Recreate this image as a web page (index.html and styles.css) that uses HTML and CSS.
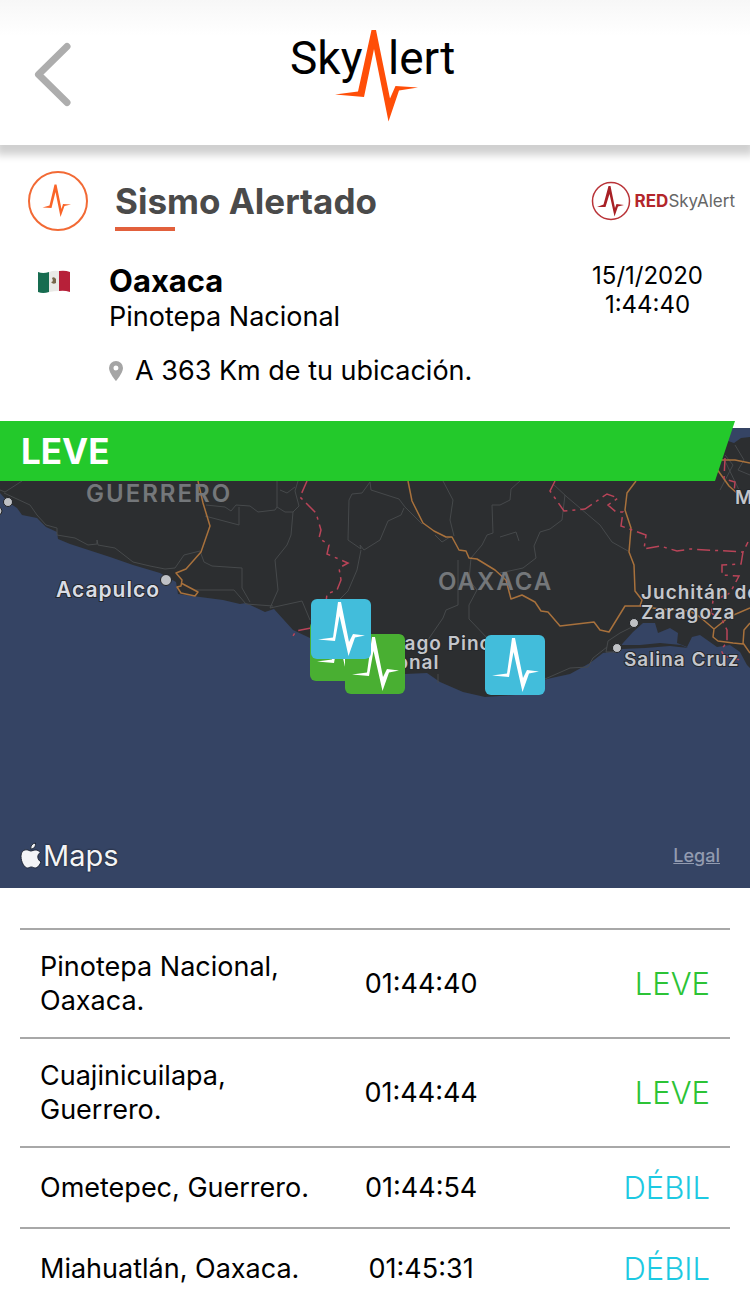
FILE: index.html
```html
<!DOCTYPE html>
<html lang="es">
<head>
<meta charset="utf-8">
<meta name="viewport" content="width=device-width, initial-scale=1">
<title>SkyAlert</title>
<link rel="stylesheet" href="styles.css">
</head>
<body>
<header class="topbar">
  <button class="back" type="button" aria-label="Atrás">
    <svg width="38" height="66" viewBox="0 0 38 66" aria-hidden="true"><path d="M33 4.500 4.500 32.500 33 60.500" fill="none" stroke="#adadad" stroke-width="7" stroke-linecap="round" stroke-linejoin="round"/></svg>
  </button>
  <svg class="brand" width="170" height="94" viewBox="291 27 170 94" role="img" aria-label="SkyAlert">
    <text x="291" y="73" class="brand-text">Sky</text>
    <text x="389" y="73" class="brand-text">lert</text>
    <path d="M336 93.500 359 90.500 372.500 29H377L391 97.500 396.500 85 419 86.500 400 89.500 389.500 120.500 375 48 365 96Z" fill="#ff4e08"/>
  </svg>
</header>
<main>
  <section class="event">
    <div class="title-row">
      <svg class="badge" width="60" height="60" viewBox="0 0 60 60" aria-hidden="true"><circle cx="30" cy="30" r="29" fill="none" stroke="#f26a35" stroke-width="2"/><path d="M14.500 36.500 21.500 34.500 26.500 13.500H28.500L33.500 38 35 33 43 33.500 36.500 35 32.500 46 27.500 21 23.500 37Z" fill="#fa6428"/></svg>
      <h1 class="title">Sismo Alertado</h1>
      <div class="network">
        <svg width="40" height="40" viewBox="0 0 40 40" aria-hidden="true"><circle cx="20" cy="20" r="18.500" fill="none" stroke="#b93338" stroke-width="1.500"/><path d="M6 26 12.500 23.500 17.500 5H19.500L24 27 25.500 23 33 24 27 25.500 23.500 35.500 18.500 13 14.500 26Z" fill="#a82025"/></svg>
        <span><b>RED</b>SkyAlert</span>
      </div>
    </div>
    <div class="details">
      <svg class="flag" width="32" height="24" viewBox="0 0 32 24" role="img" aria-label="México"><path d="M0 2Q5 4 11 2V22Q5 24 0 22Z" fill="#176c50"/><path d="M11 2Q16 0 21 1V21Q16 21 11 22Z" fill="#e9e9e6"/><path d="M21 1Q27 0 32 2V22Q26 20 21 21Z" fill="#b72039"/><path d="M14 8Q16 6 18 9L18 13Q15 15 13 12Q16 12 14 8Z" fill="#76664a"/></svg>
      <div class="place">
        <h2 class="state">Oaxaca</h2>
        <p class="city">Pinotepa Nacional</p>
        <p class="distance"><svg width="14" height="20" viewBox="0 0 14 20" aria-hidden="true"><path fill-rule="evenodd" d="M7 0a7 7 0 0 1 7 7c0 5-7 13-7 13S0 12 0 7a7 7 0 0 1 7-7Zm0 4.500a2.500 2.500 0 1 0 0 5 2.500 2.500 0 0 0 0-5Z" fill="#a5a5a5"/></svg>A 363 Km de tu ubicación.</p>
      </div>
      <p class="when">15/1/2020<br>1:44:40</p>
    </div>
  </section>
  <section class="map" aria-label="Mapa">
    <svg class="map-art" viewBox="0 428 750 460" preserveAspectRatio="xMidYMid slice">
      <defs>
        <path id="pulse" d="M7 40.500 22 38.500 27 3H30L38 43 42 35 54 36.500 44 38.500 37.500 57 28.500 17 24 42Z" fill="#fff"/>
      </defs>
      <rect y="428" width="750" height="460" fill="#2c2e30"/>
      <path d="M0 493 8 502 17 508 22 515 37 518 46 527 57 532 58 539 70 544 110 557 133 565 160 573 176 582 178 594 200 597 223 600 240 604 246 603 265 612 274 609 293 630 310 638 345 670 405 674 427 673 440 682 463 692 485 697 515 695 547 679 570 674 590 663 603 653 617 651 623 643 633 632 643 623 655 623 658 633 670 628 678 633 677 643 687 647 692 637 700 635 717 647 730 645 740 652 747 665 750 668V888H0Z" fill="#354464"/>
      <path d="M728 428H750V437L741 438 734 443 725 440Z" fill="#354464"/>
      <path d="M619 645 640 645 660 643 681 645 688 648 670 646 645 648 622 649Z" fill="#2c2e30"/>
      <g fill="none" stroke="#46494b" stroke-width="1">
        <path d="M0 490 5 492 22 481M4 493 30 505 37 515 46 525 57 528V535L75 538 88 545 97 544V540L98 545 115 548 133 562 150 566 165 569 175 568 184 555 200 551 204 562 212 566 242 568V588L250 602"/>
        <path d="M206 505 225 507 231 511 236 505 250 506 258 512 275 510 277 507 285 512 293 512 299 506 295 491 298 481M277 481V507M280 490 287 493 295 487M205 516 239 525V507"/>
        <path d="M293 512 291 535 287 545 275 560 278 590 270 608 302 601 310 620M273 606 246 604 234 590 195 590"/>
        <path d="M370 482 371 490 399 499 405 507 422 524M370 482 362 493 352 494 349 500 348 540 361 549 360 545 364 550 380 540 388 521 401 515 404 508M361 550 357 570 348 591 339 600"/>
        <path d="M443 481 453 500 450 520 454 536M435 535 442 542 450 537M500 505H492L493 533 487 535 482 545 471 558 469 580 477 590 469 605V619L490 641M458 560V605L446 610 443 618 432 634 425 644M438 674V683"/>
        <path d="M520 481 511 489 510 500 500 505M553 484 567 497 600 525 612 542 628 551M565 495 562 520 550 529 540 532 534 546 536 558 523 568 500 573M500 537 516 532 519 541M632 627 620 633 608 641 606 652 618 652M607 647 593 658 588 667 570 668 545 679"/>
        <path d="M720 490 733 465 725 455M735 445 744 460 738 470 750 475M725 461 740 492"/>
      </g>
      <g fill="none" stroke="#a8713c" stroke-width="1.500" stroke-linejoin="round">
        <path d="M198 481 203 503 210 526 201 552 186 569 176 573 182 580 181 586 177 587 181 593 195 596 198 592 181 583"/>
        <path d="M408 481 412 501 423 523 434 531 446 537 452 537 459 550 466 551 469 558 477 559 495 570 506 580 511 599 522 595 535 602 541 611 548 612 560 626 594 622 600 630 609 632 625 606 640 606 642 600 635 591 634 565 629 552 631 528 625 510 627 493 636 481"/>
        <path d="M640 606 660 609 690 611 700 617 714 629 713 637 718 641 733 643 743 644 744 630 750 623M714 629 729 617 750 608M743 643 750 653M714 465 729 486 738 494M721 460 735 460 750 463"/>
      </g>
      <g fill="none" stroke="#b94458" stroke-width="1.500" stroke-dasharray="13 5 3 5">
        <path d="M307 481 300 497 316 513 321 530 319 538 329 545 327 554 348 563 339 568 341 580 337 590 327 594 326 602M311 628 296 631 293 636"/>
        <path d="M555 481 550 491 564 511 585 509 607 494 618 498 608 505 616 512 623 512 621 526 632 530 646 535 644 549 660 546 677 551 690 549 743 552 748 542M743 552 741 564 722 565V575L739 576 730 593 713 601 711 613 722 620 727 630V642L721 650 724 656 740 660M725 458 724 479 735 482 734 493"/>
      </g>
      <g fill="#bfc1c5" stroke="#202225">
        <circle cx="8" cy="502" r="4.500"/><circle cx="166" cy="580" r="5.500"/><circle cx="634" cy="623" r="4.500"/><circle cx="617" cy="648" r="4.500"/><circle cx="-2" cy="511" r="4"/>
      </g>
      <g class="region"><text x="86" y="502">GUERRERO</text><text x="438" y="590">OAXACA</text></g>
      <g class="town">
        <text class="town-big" x="56" y="597">Acapulco</text>
        <text x="353" y="650">Santiago Pinotepa</text><text x="351" y="669">Nacional</text>
        <text x="641" y="599">Juchitán de</text><text x="641" y="619">Zaragoza</text>
        <text x="624" y="666">Salina Cruz</text><text x="735" y="504">Mi</text>
      </g>
      <g transform="translate(310 621)"><rect width="60" height="60" rx="6" fill="#49af32"/><use href="#pulse"/></g>
      <g transform="translate(345 634)"><rect width="60" height="60" rx="6" fill="#49af32"/><use href="#pulse"/></g>
      <g transform="translate(311 599)"><rect width="60" height="60" rx="6" fill="#42bddb"/><use href="#pulse"/></g>
      <g transform="translate(485 635)"><rect width="60" height="60" rx="6" fill="#42bddb"/><use href="#pulse"/></g>
    </svg>
    <p class="banner">LEVE</p>
    <div class="map-credits">
      <span class="maps-logo"><svg width="22" height="28" viewBox="0 0 22 28" aria-hidden="true"><path d="M15.500 1C12 1.500 10.500 4 10.800 7 14 7 15.800 4.500 15.500 1ZM11 9C9.500 9 8.500 7.800 6.200 7.800 3 7.800 1 10.500 1 14.500 1 20 4.500 26 7.500 26 9 26 9.500 25 11.300 25S13.800 26 15.200 26C17.800 26 20 22.500 21 19.800 17 18 16.800 12.500 20.300 10.500 17.500 6.500 13.500 8.500 11 9Z" fill="#f3f4f6" stroke="#1d2534"/></svg>Maps</span>
      <a class="legal" href="#legal">Legal</a>
    </div>
  </section>
  <table class="stations">
    <tbody>
      <tr><td class="station">Pinotepa Nacional, Oaxaca.</td><td class="time">01:44:40</td><td class="level level-mild">LEVE</td></tr>
      <tr><td class="station">Cuajinicuilapa, Guerrero.</td><td class="time">01:44:44</td><td class="level level-mild">LEVE</td></tr>
      <tr><td class="station">Ometepec, Guerrero.</td><td class="time">01:44:54</td><td class="level level-weak">DÉBIL</td></tr>
      <tr><td class="station">Miahuatlán, Oaxaca.</td><td class="time">01:45:31</td><td class="level level-weak">DÉBIL</td></tr>
    </tbody>
  </table>
</main>
</body>
</html>
```
FILE: styles.css
```css
* { box-sizing: border-box; }
body { margin: 0; background: #fff; color: #000; font-family: Inter, "Liberation Sans", sans-serif; overflow-x: hidden; }
h1, h2, p { margin: 0; }
.topbar { height: 145px; padding: 28px 34px 24px; display: grid; grid-template-columns: 1fr auto 1fr; align-items: center; background: linear-gradient(#f7f7f7, #fff 36px); box-shadow: 0 6px 8px 4px #d0d0d0; position: relative; }
.back { justify-self: start; display: flex; padding: 0; border: 0; background: none; cursor: pointer; }
.brand { display: block; }
.brand-text { font: 46px Roboto, sans-serif; }
.event { padding: 26px 15px 0 28px; }
.title-row { display: flex; align-items: center; height: 60px; }
.title { margin-left: 27px; height: 60px; font-size: 35px; line-height: 60px; font-weight: 700; color: #4a4a4a; position: relative; }
.title::after { content: ""; position: absolute; left: 0; bottom: 0; width: 60px; height: 4px; background: #e2603c; }
.network { margin-left: auto; display: flex; align-items: center; gap: 4px; font-size: 17px; color: #666; }
.network b { color: #b3262b; }
.details { display: flex; align-items: flex-start; padding: 30px 32px 30px 10px; }
.flag { margin-top: 9px; }
.place { margin-left: 39px; margin-top: 2px; }
.state { font-size: 31px; line-height: 36px; font-weight: 700; }
.city { font-size: 27px; line-height: 36px; }
.distance { display: flex; align-items: center; gap: 12px; margin-top: 18px; font-size: 27px; line-height: 36px; }
.when { margin-left: auto; font-size: 24px; line-height: 29px; text-align: center; }
.map { position: relative; height: 460px; margin-top: 9px; }
.map-art { display: block; width: 100%; height: 100%; }
.region { font-size: 24px; font-weight: 600; letter-spacing: 2px; fill: #74777a; }
.town { font-size: 19px; font-weight: 600; letter-spacing: 1px; fill: #c4c6cb; stroke: #25282c; stroke-width: 2px; paint-order: stroke; }
.town-big { font-size: 21px; fill: #d9dce5; }
.banner { position: absolute; top: -7px; left: 0; right: 15px; padding-left: 21px; background: #23c92b; clip-path: polygon(0 0, 100% 0, calc(100% - 20px) 100%, 0 100%); color: #fff; font-size: 35px; line-height: 60px; font-weight: 700; }
.map-credits { position: absolute; left: 20px; right: 30px; bottom: 12px; display: flex; align-items: center; justify-content: space-between; }
.maps-logo { display: flex; align-items: center; gap: 1px; color: #f3f4f6; font-size: 29px; line-height: 40px; text-shadow: 0 0 2px #111; }
.legal { color: #929bb0; font-size: 18px; line-height: 36px; font-weight: 500; }
.stations { width: calc(100% - 40px); margin: 40px 20px 0; border-collapse: separate; border-spacing: 0; table-layout: fixed; }
.stations td { padding: 20px 0 19px; border-top: 2px solid #a8a8a8; vertical-align: middle; }
.stations .station { width: 42%; padding-left: 20px; font-size: 27px; line-height: 34px; }
.stations .time { width: 29%; font-size: 27px; line-height: 34px; text-align: center; }
.stations .level { padding-right: 20px; font-size: 31px; line-height: 40px; text-align: right; font-weight: 300; }
.level-mild { color: #2cc336; }
.level-weak { color: #1dc9e2; }
```
